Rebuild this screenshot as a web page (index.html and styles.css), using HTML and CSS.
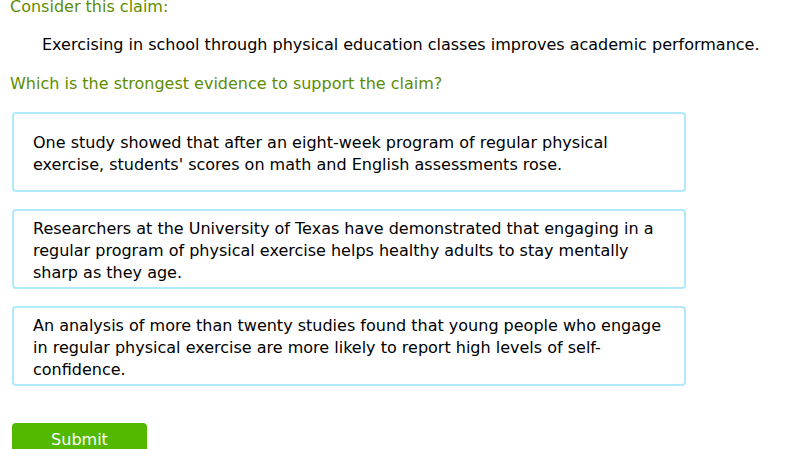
FILE: index.html
```html
<!DOCTYPE html>
<html>
<head>
<meta charset="utf-8">
<link rel="stylesheet" href="styles.css">
</head>
<body>
<div class="page">
  <div class="prompt">Consider this claim:</div>
  <div class="claim">Exercising in school through physical education classes improves academic performance.</div>
  <div class="question">Which is the strongest evidence to support the claim?</div>
  <div class="choices">
    <div class="choice">One study showed that after an eight-week program of regular physical exercise, students' scores on math and English assessments rose.</div>
    <div class="choice">Researchers at the University of Texas have demonstrated that engaging in a regular program of physical exercise helps healthy adults to stay mentally sharp as they age.</div>
    <div class="choice">An analysis of more than twenty studies found that young people who engage in regular physical exercise are more likely to report high levels of self-confidence.</div>
  </div>
  <button class="submit">Submit</button>
</div>
</body>
</html>
```
FILE: styles.css
```css
html, body {
  margin: 0;
  padding: 0;
  background: #fff;
  overflow: hidden;
}
.page {
  font-family: "DejaVu Sans", Verdana, sans-serif;
  font-size: 16px;
  line-height: 22px;
  color: #000;
  padding: 0 10px;
  margin-top: -4px;
}
.prompt {
  color: #5e8c00;
}
.claim {
  margin-top: 16px;
  padding-left: 32px;
}
.question {
  color: #5e8c00;
  margin-top: 17px;
}
.choices {
  margin-top: 17px;
  margin-left: 2px;
  width: 674px;
  display: flex;
  flex-direction: column;
  gap: 17px;
}
.choice {
  box-sizing: border-box;
  height: 80px;
  border: 2px solid #b0e8fc;
  border-radius: 4px;
  padding: 3px 19px 0;
  display: flex;
  align-items: center;
}
.submit {
  margin-top: 37px;
  margin-left: 2px;
  width: 135px;
  height: 34px;
  border: none;
  border-radius: 4px;
  background: #52b800;
  color: #fff;
  font-family: "DejaVu Sans", Verdana, sans-serif;
  font-size: 16px;
  line-height: 22px;
  padding: 6px 0 0;
  display: flex;
  justify-content: center;
  align-items: flex-start;
}
```
